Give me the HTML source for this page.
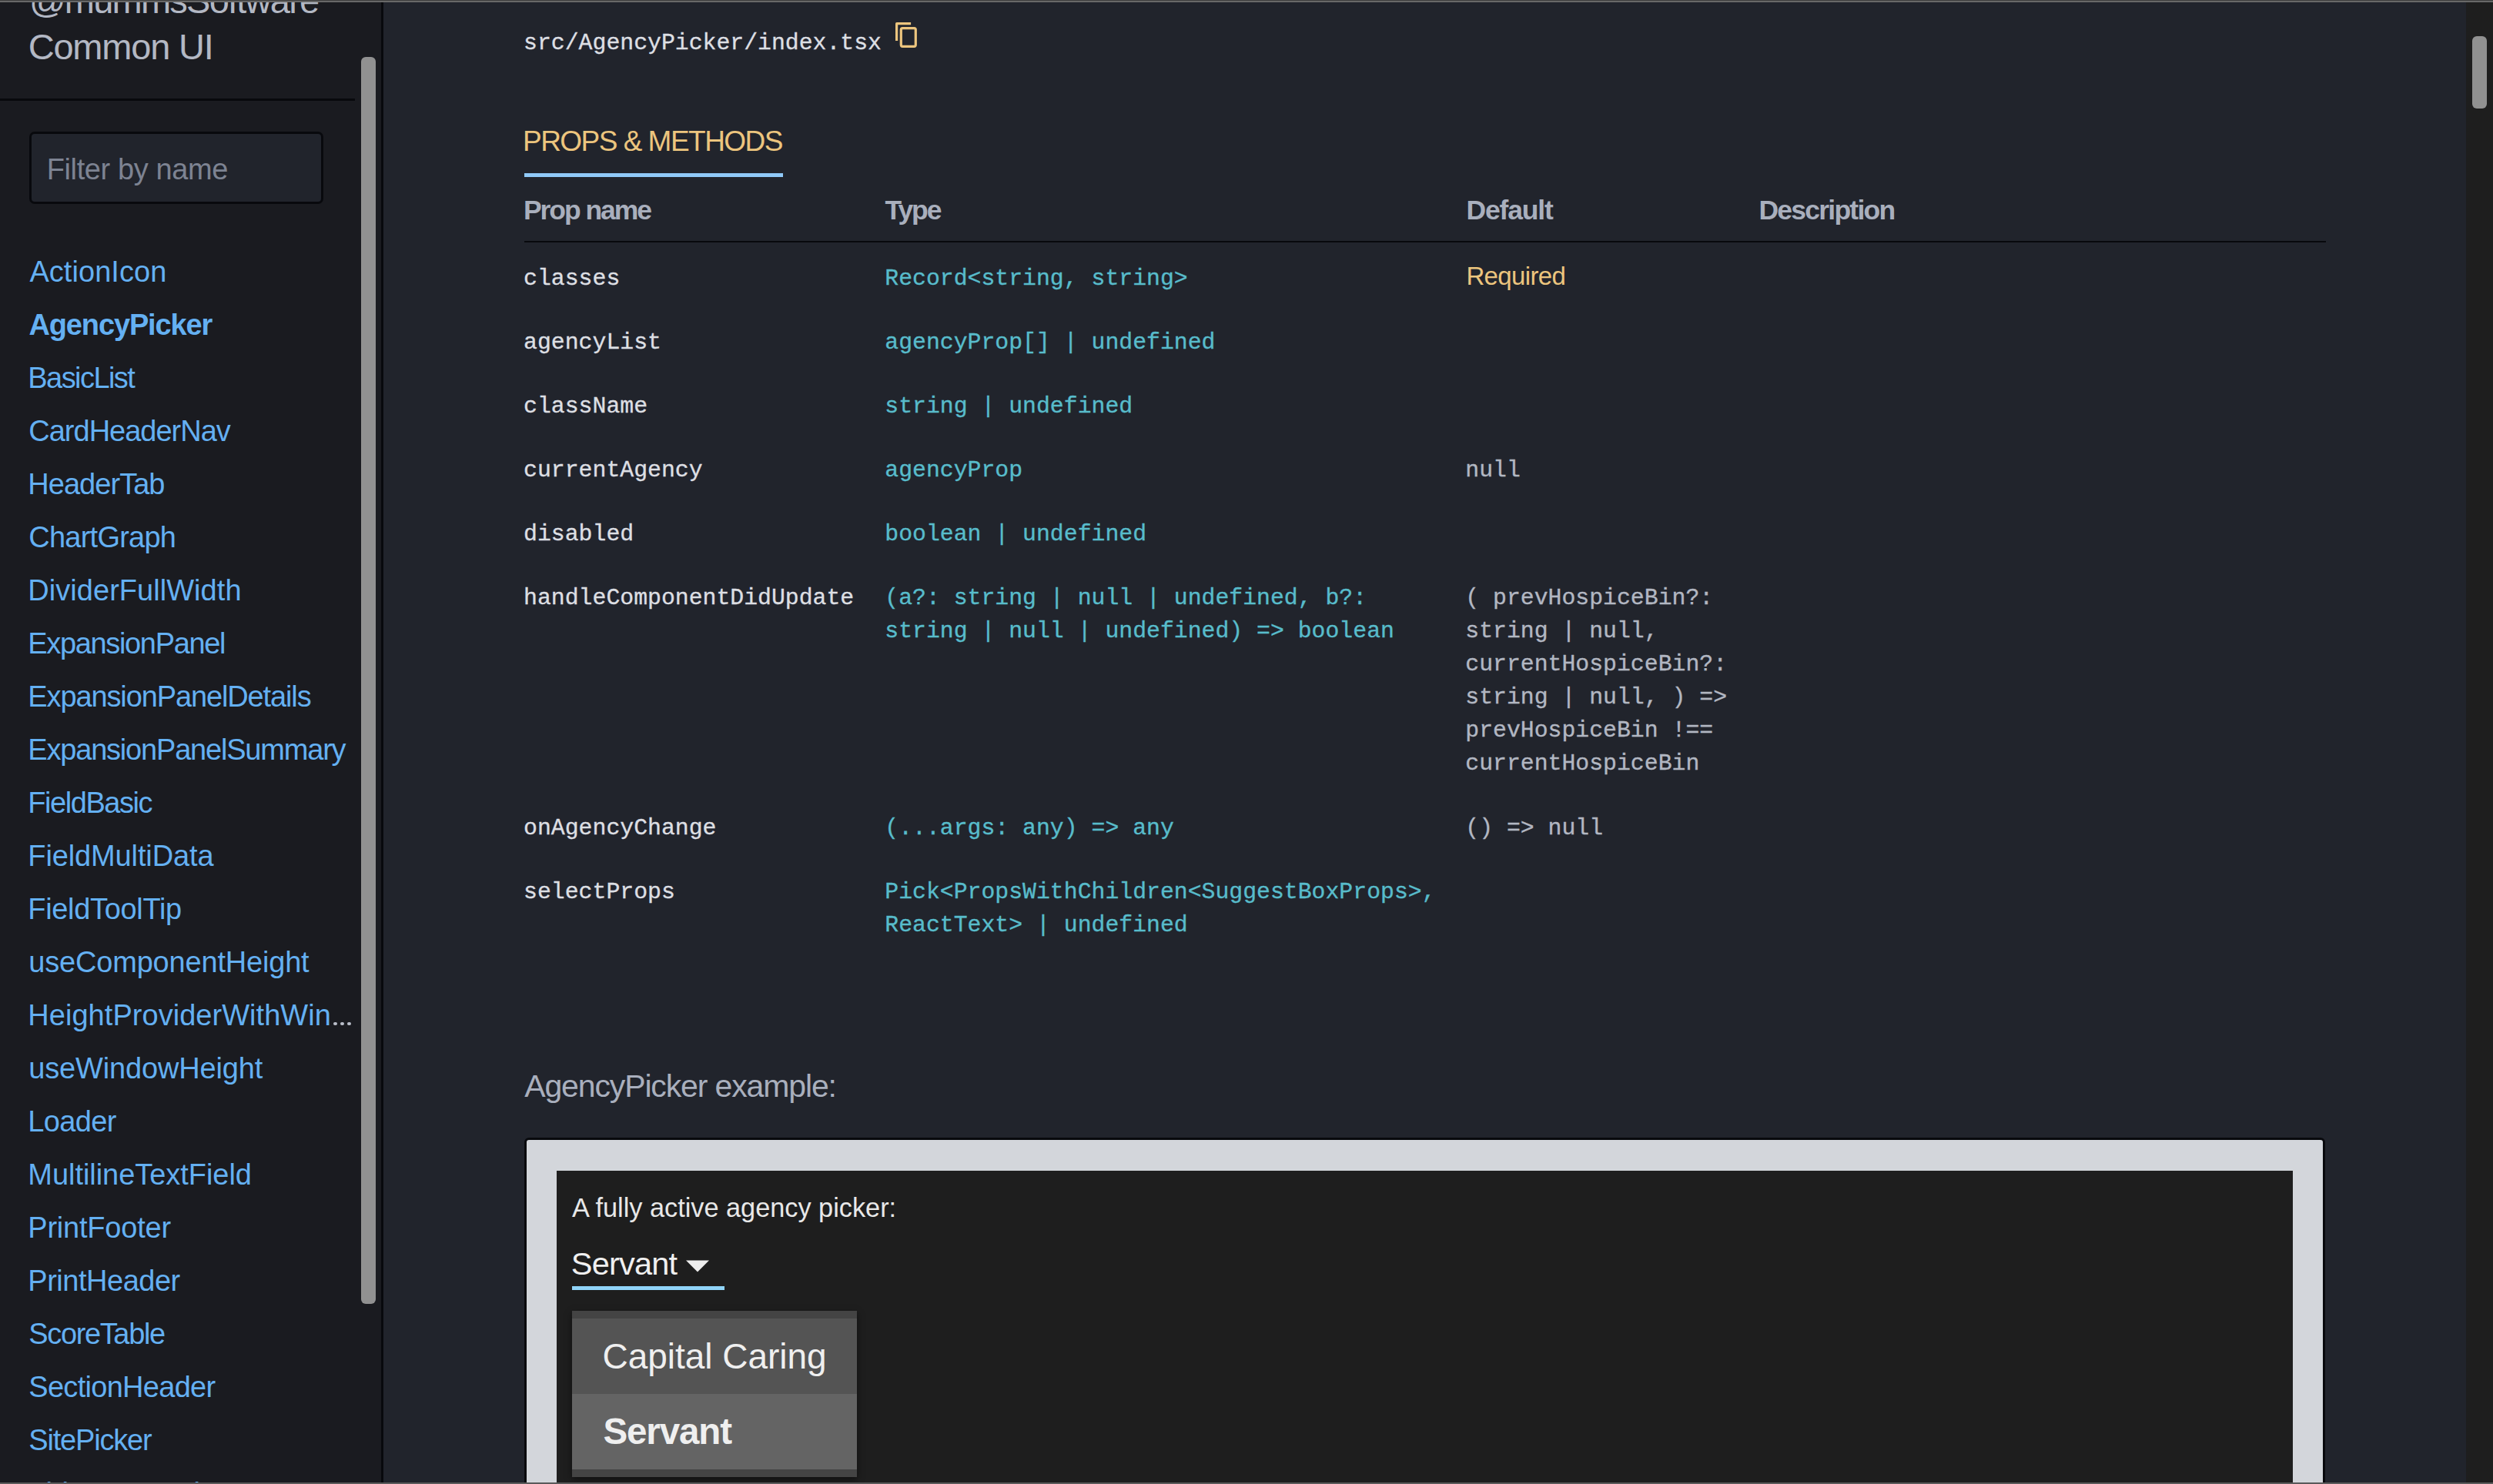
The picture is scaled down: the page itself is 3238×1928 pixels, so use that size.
<!DOCTYPE html>
<html><head><meta charset="utf-8"><title>AgencyPicker</title>
<style>
html,body{margin:0;padding:0;width:3238px;height:1928px;overflow:hidden;background:#21242c;}
body>div,body>svg{position:absolute;white-space:pre;}
</style></head><body>
<div style="left:0px;top:0px;width:3238px;height:1928px;background:#21242c;"></div>
<div style="left:0px;top:0px;width:495px;height:1928px;background:#1a1b20;"></div>
<div style="left:495px;top:0px;width:3px;height:1928px;background:#08090d;"></div>
<div style="left:3203px;top:0px;width:35px;height:1928px;background:#1e1e1e;"></div>
<div style="left:3211px;top:47px;width:19px;height:94px;background:#919191;border-radius:6px"></div>
<div style="left:469px;top:74px;width:19px;height:1620px;background:#919191;border-radius:6px"></div>
<div style="left:37.90px;top:-27.29px;font-family:'Liberation Sans', sans-serif;font-size:47px;font-weight:400;color:#b3b8c4;line-height:56px;letter-spacing:-1.769px;">@mummsSoftware</div>
<div style="left:36.70px;top:32.71px;font-family:'Liberation Sans', sans-serif;font-size:47px;font-weight:400;color:#b3b8c4;line-height:56px;letter-spacing:-1.212px;">Common UI</div>
<div style="left:0px;top:128px;width:461px;height:3px;background:#08090d;"></div>
<div style="left:38px;top:171px;width:382px;height:94px;background:#21242c;box-sizing:border-box;border:3px solid #08090d;border-radius:7px"></div>
<div style="left:60.70px;top:197.03px;font-family:'Liberation Sans', sans-serif;font-size:38px;font-weight:400;color:#7d8392;line-height:46px;letter-spacing:-0.385px;">Filter by name</div>
<div style="left:38.40px;top:330.23px;font-family:'Liberation Sans', sans-serif;font-size:38px;font-weight:400;color:#64b0f2;line-height:46px;letter-spacing:0.056px;">ActionIcon</div>
<div style="left:37.40px;top:399.23px;font-family:'Liberation Sans', sans-serif;font-size:38px;font-weight:700;color:#64b0f2;line-height:46px;letter-spacing:-1.127px;">AgencyPicker</div>
<div style="left:36.30px;top:468.23px;font-family:'Liberation Sans', sans-serif;font-size:38px;font-weight:400;color:#64b0f2;line-height:46px;letter-spacing:-1.562px;">BasicList</div>
<div style="left:37.30px;top:537.23px;font-family:'Liberation Sans', sans-serif;font-size:38px;font-weight:400;color:#64b0f2;line-height:46px;letter-spacing:-1.008px;">CardHeaderNav</div>
<div style="left:36.30px;top:606.23px;font-family:'Liberation Sans', sans-serif;font-size:38px;font-weight:400;color:#64b0f2;line-height:46px;letter-spacing:-0.962px;">HeaderTab</div>
<div style="left:37.30px;top:675.23px;font-family:'Liberation Sans', sans-serif;font-size:38px;font-weight:400;color:#64b0f2;line-height:46px;letter-spacing:-0.767px;">ChartGraph</div>
<div style="left:36.30px;top:744.23px;font-family:'Liberation Sans', sans-serif;font-size:38px;font-weight:400;color:#64b0f2;line-height:46px;letter-spacing:0.040px;">DividerFullWidth</div>
<div style="left:36.30px;top:813.23px;font-family:'Liberation Sans', sans-serif;font-size:38px;font-weight:400;color:#64b0f2;line-height:46px;letter-spacing:-1.346px;">ExpansionPanel</div>
<div style="left:36.30px;top:882.23px;font-family:'Liberation Sans', sans-serif;font-size:38px;font-weight:400;color:#64b0f2;line-height:46px;letter-spacing:-1.120px;">ExpansionPanelDetails</div>
<div style="left:36.30px;top:951.23px;font-family:'Liberation Sans', sans-serif;font-size:38px;font-weight:400;color:#64b0f2;line-height:46px;letter-spacing:-1.195px;">ExpansionPanelSummary</div>
<div style="left:36.30px;top:1020.23px;font-family:'Liberation Sans', sans-serif;font-size:38px;font-weight:400;color:#64b0f2;line-height:46px;letter-spacing:-1.444px;">FieldBasic</div>
<div style="left:36.30px;top:1089.23px;font-family:'Liberation Sans', sans-serif;font-size:38px;font-weight:400;color:#64b0f2;line-height:46px;letter-spacing:-0.123px;">FieldMultiData</div>
<div style="left:36.30px;top:1158.23px;font-family:'Liberation Sans', sans-serif;font-size:38px;font-weight:400;color:#64b0f2;line-height:46px;letter-spacing:-0.327px;">FieldToolTip</div>
<div style="left:37.30px;top:1227.23px;font-family:'Liberation Sans', sans-serif;font-size:38px;font-weight:400;color:#64b0f2;line-height:46px;letter-spacing:-0.188px;">useComponentHeight</div>
<div style="left:36.30px;top:1296.23px;font-family:'Liberation Sans', sans-serif;font-size:38px;font-weight:400;color:#64b0f2;line-height:46px;letter-spacing:0.040px;">HeightProviderWithWin</div>
<div style="left:37.30px;top:1365.23px;font-family:'Liberation Sans', sans-serif;font-size:38px;font-weight:400;color:#64b0f2;line-height:46px;letter-spacing:-0.157px;">useWindowHeight</div>
<div style="left:36.30px;top:1434.23px;font-family:'Liberation Sans', sans-serif;font-size:38px;font-weight:400;color:#64b0f2;line-height:46px;letter-spacing:-0.660px;">Loader</div>
<div style="left:36.30px;top:1503.23px;font-family:'Liberation Sans', sans-serif;font-size:38px;font-weight:400;color:#64b0f2;line-height:46px;letter-spacing:-0.047px;">MultilineTextField</div>
<div style="left:36.30px;top:1572.23px;font-family:'Liberation Sans', sans-serif;font-size:38px;font-weight:400;color:#64b0f2;line-height:46px;letter-spacing:-0.220px;">PrintFooter</div>
<div style="left:36.30px;top:1641.23px;font-family:'Liberation Sans', sans-serif;font-size:38px;font-weight:400;color:#64b0f2;line-height:46px;letter-spacing:-0.480px;">PrintHeader</div>
<div style="left:37.30px;top:1710.23px;font-family:'Liberation Sans', sans-serif;font-size:38px;font-weight:400;color:#64b0f2;line-height:46px;letter-spacing:-1.367px;">ScoreTable</div>
<div style="left:37.30px;top:1779.23px;font-family:'Liberation Sans', sans-serif;font-size:38px;font-weight:400;color:#64b0f2;line-height:46px;letter-spacing:-0.708px;">SectionHeader</div>
<div style="left:37.30px;top:1848.23px;font-family:'Liberation Sans', sans-serif;font-size:38px;font-weight:400;color:#64b0f2;line-height:46px;letter-spacing:-1.189px;">SitePicker</div>
<div style="left:38.30px;top:1917.23px;font-family:'Liberation Sans', sans-serif;font-size:38px;font-weight:400;color:#64b0f2;line-height:46px;">ablxxxxxxxxtk</div>
<div style="left:432.9px;top:1327.5px;width:4.8px;height:4.8px;background:#b9bdc8;border-radius:50%"></div>
<div style="left:442.1px;top:1327.5px;width:4.8px;height:4.8px;background:#b9bdc8;border-radius:50%"></div>
<div style="left:451.2px;top:1327.5px;width:4.8px;height:4.8px;background:#b9bdc8;border-radius:50%"></div>
<div style="left:680.10px;top:34.67px;font-family:'Liberation Mono', monospace;font-size:29.8px;color:#dddfe3;line-height:43px;-webkit-text-stroke:0.35px #dddfe3">src/AgencyPicker/index.tsx</div>
<svg style="left:1160px;top:27px" width="34" height="38" viewBox="0 0 34 38"><path d="M4.6 26 V3.7 H23.1" fill="none" stroke="#ecc57e" stroke-width="3.2" stroke-linejoin="round"/><rect x="10.3" y="9.6" width="19" height="23.7" rx="2" fill="none" stroke="#ecc57e" stroke-width="3.2"/></svg>
<div style="left:679.00px;top:161.67px;font-family:'Liberation Sans', sans-serif;font-size:37px;font-weight:400;color:#ecc57e;line-height:44px;letter-spacing:-1.521px;">PROPS &amp; METHODS</div>
<div style="left:681px;top:225px;width:336px;height:5px;background:#90caf9;"></div>
<div style="left:680.00px;top:252.19px;font-family:'Liberation Sans', sans-serif;font-size:35.5px;font-weight:700;color:#a9afbd;line-height:43px;letter-spacing:-2.062px;">Prop name</div>
<div style="left:1149.60px;top:252.19px;font-family:'Liberation Sans', sans-serif;font-size:35.5px;font-weight:700;color:#a9afbd;line-height:43px;letter-spacing:-2.133px;">Type</div>
<div style="left:1904.40px;top:252.19px;font-family:'Liberation Sans', sans-serif;font-size:35.5px;font-weight:700;color:#a9afbd;line-height:43px;letter-spacing:-1.133px;">Default</div>
<div style="left:2284.40px;top:252.19px;font-family:'Liberation Sans', sans-serif;font-size:35.5px;font-weight:700;color:#a9afbd;line-height:43px;letter-spacing:-1.750px;">Description</div>
<div style="left:681px;top:313px;width:2340px;height:2px;background:#08090d;"></div>
<div style="left:680.10px;top:341.27px;font-family:'Liberation Mono', monospace;font-size:29.8px;color:#dddfe3;line-height:43px;-webkit-text-stroke:0.35px #dddfe3">classes</div>
<div style="left:1149.30px;top:341.27px;font-family:'Liberation Mono', monospace;font-size:29.8px;color:#58bccb;line-height:43px;-webkit-text-stroke:0.35px #58bccb">Record&lt;string, string&gt;</div>
<div style="left:1904.40px;top:338.96px;font-family:'Liberation Sans', sans-serif;font-size:33px;font-weight:400;color:#ecc57e;line-height:40px;letter-spacing:-0.629px;">Required</div>
<div style="left:680.10px;top:423.97px;font-family:'Liberation Mono', monospace;font-size:29.8px;color:#dddfe3;line-height:43px;-webkit-text-stroke:0.35px #dddfe3">agencyList</div>
<div style="left:1149.30px;top:423.97px;font-family:'Liberation Mono', monospace;font-size:29.8px;color:#58bccb;line-height:43px;-webkit-text-stroke:0.35px #58bccb">agencyProp[] | undefined</div>
<div style="left:680.10px;top:506.97px;font-family:'Liberation Mono', monospace;font-size:29.8px;color:#dddfe3;line-height:43px;-webkit-text-stroke:0.35px #dddfe3">className</div>
<div style="left:1149.30px;top:506.97px;font-family:'Liberation Mono', monospace;font-size:29.8px;color:#58bccb;line-height:43px;-webkit-text-stroke:0.35px #58bccb">string | undefined</div>
<div style="left:680.10px;top:589.97px;font-family:'Liberation Mono', monospace;font-size:29.8px;color:#dddfe3;line-height:43px;-webkit-text-stroke:0.35px #dddfe3">currentAgency</div>
<div style="left:1149.30px;top:589.97px;font-family:'Liberation Mono', monospace;font-size:29.8px;color:#58bccb;line-height:43px;-webkit-text-stroke:0.35px #58bccb">agencyProp</div>
<div style="left:1903.30px;top:589.97px;font-family:'Liberation Mono', monospace;font-size:29.8px;color:#b2b7c2;line-height:43px;-webkit-text-stroke:0.35px #b2b7c2">null</div>
<div style="left:680.10px;top:672.77px;font-family:'Liberation Mono', monospace;font-size:29.8px;color:#dddfe3;line-height:43px;-webkit-text-stroke:0.35px #dddfe3">disabled</div>
<div style="left:1149.30px;top:672.77px;font-family:'Liberation Mono', monospace;font-size:29.8px;color:#58bccb;line-height:43px;-webkit-text-stroke:0.35px #58bccb">boolean | undefined</div>
<div style="left:680.10px;top:756.27px;font-family:'Liberation Mono', monospace;font-size:29.8px;color:#dddfe3;line-height:43px;-webkit-text-stroke:0.35px #dddfe3">handleComponentDidUpdate</div>
<div style="left:1149.30px;top:756.27px;font-family:'Liberation Mono', monospace;font-size:29.8px;color:#58bccb;line-height:43px;-webkit-text-stroke:0.35px #58bccb">(a?: string | null | undefined, b?:
string | null | undefined) =&gt; boolean</div>
<div style="left:1903.30px;top:756.27px;font-family:'Liberation Mono', monospace;font-size:29.8px;color:#b2b7c2;line-height:43px;-webkit-text-stroke:0.35px #b2b7c2">( prevHospiceBin?:
string | null,
currentHospiceBin?:
string | null, ) =&gt;
prevHospiceBin !==
currentHospiceBin</div>
<div style="left:680.10px;top:1055.07px;font-family:'Liberation Mono', monospace;font-size:29.8px;color:#dddfe3;line-height:43px;-webkit-text-stroke:0.35px #dddfe3">onAgencyChange</div>
<div style="left:1149.30px;top:1055.07px;font-family:'Liberation Mono', monospace;font-size:29.8px;color:#58bccb;line-height:43px;-webkit-text-stroke:0.35px #58bccb">(...args: any) =&gt; any</div>
<div style="left:1903.30px;top:1055.07px;font-family:'Liberation Mono', monospace;font-size:29.8px;color:#b2b7c2;line-height:43px;-webkit-text-stroke:0.35px #b2b7c2">() =&gt; null</div>
<div style="left:680.10px;top:1138.27px;font-family:'Liberation Mono', monospace;font-size:29.8px;color:#dddfe3;line-height:43px;-webkit-text-stroke:0.35px #dddfe3">selectProps</div>
<div style="left:1149.30px;top:1138.27px;font-family:'Liberation Mono', monospace;font-size:29.8px;color:#58bccb;line-height:43px;-webkit-text-stroke:0.35px #58bccb">Pick&lt;PropsWithChildren&lt;SuggestBoxProps&gt;,
ReactText&gt; | undefined</div>
<div style="left:681.20px;top:1386.59px;font-family:'Liberation Sans', sans-serif;font-size:41px;font-weight:400;color:#a9afbd;line-height:49px;letter-spacing:-1.130px;">AgencyPicker example:</div>
<div style="left:681px;top:1478px;width:2339px;height:460px;background:#d3d6db;box-sizing:border-box;border:3px solid #08090d;border-radius:6px"></div>
<div style="left:723px;top:1521px;width:2255px;height:420px;background:#1e1e1e;"></div>
<div style="left:743.00px;top:1548.61px;font-family:'Liberation Sans', sans-serif;font-size:34.3px;font-weight:400;color:#e8e8e8;line-height:41px;letter-spacing:-0.007px;">A fully active agency picker:</div>
<div style="left:741.80px;top:1617.41px;font-family:'Liberation Sans', sans-serif;font-size:41.5px;font-weight:400;color:#f0f0f0;line-height:50px;letter-spacing:-0.800px;">Servant</div>
<svg style="left:890px;top:1637px" width="32" height="16" viewBox="0 0 32 16"><path d="M1 0.5 H31 L16 15.5 Z" fill="#eeeeee"/></svg>
<div style="left:743px;top:1671px;width:198px;height:5px;background:#90d4f8;"></div>
<div style="left:743px;top:1703px;width:370px;height:216px;background:#444444;box-shadow:0 3px 8px rgba(0,0,0,0.5)"></div>
<div style="left:743px;top:1713px;width:370px;height:98px;background:#545454;"></div>
<div style="left:743px;top:1811px;width:370px;height:98px;background:#646464;"></div>
<div style="left:782.50px;top:1734.55px;font-family:'Liberation Sans', sans-serif;font-size:46px;font-weight:400;color:#efefef;line-height:55px;letter-spacing:-0.023px;">Capital Caring</div>
<div style="left:783.50px;top:1831.23px;font-family:'Liberation Sans', sans-serif;font-size:47.5px;font-weight:700;color:#efefef;line-height:57px;letter-spacing:-1.117px;">Servant</div>
<div style="left:0px;top:0px;width:3238px;height:3px;background:#686868;"></div>
<div style="left:0px;top:0px;width:3238px;height:1px;background:#3c3c3c;"></div>
<div style="left:0px;top:1926px;width:3238px;height:2px;background:#5a5a5a;"></div>
</body></html>
